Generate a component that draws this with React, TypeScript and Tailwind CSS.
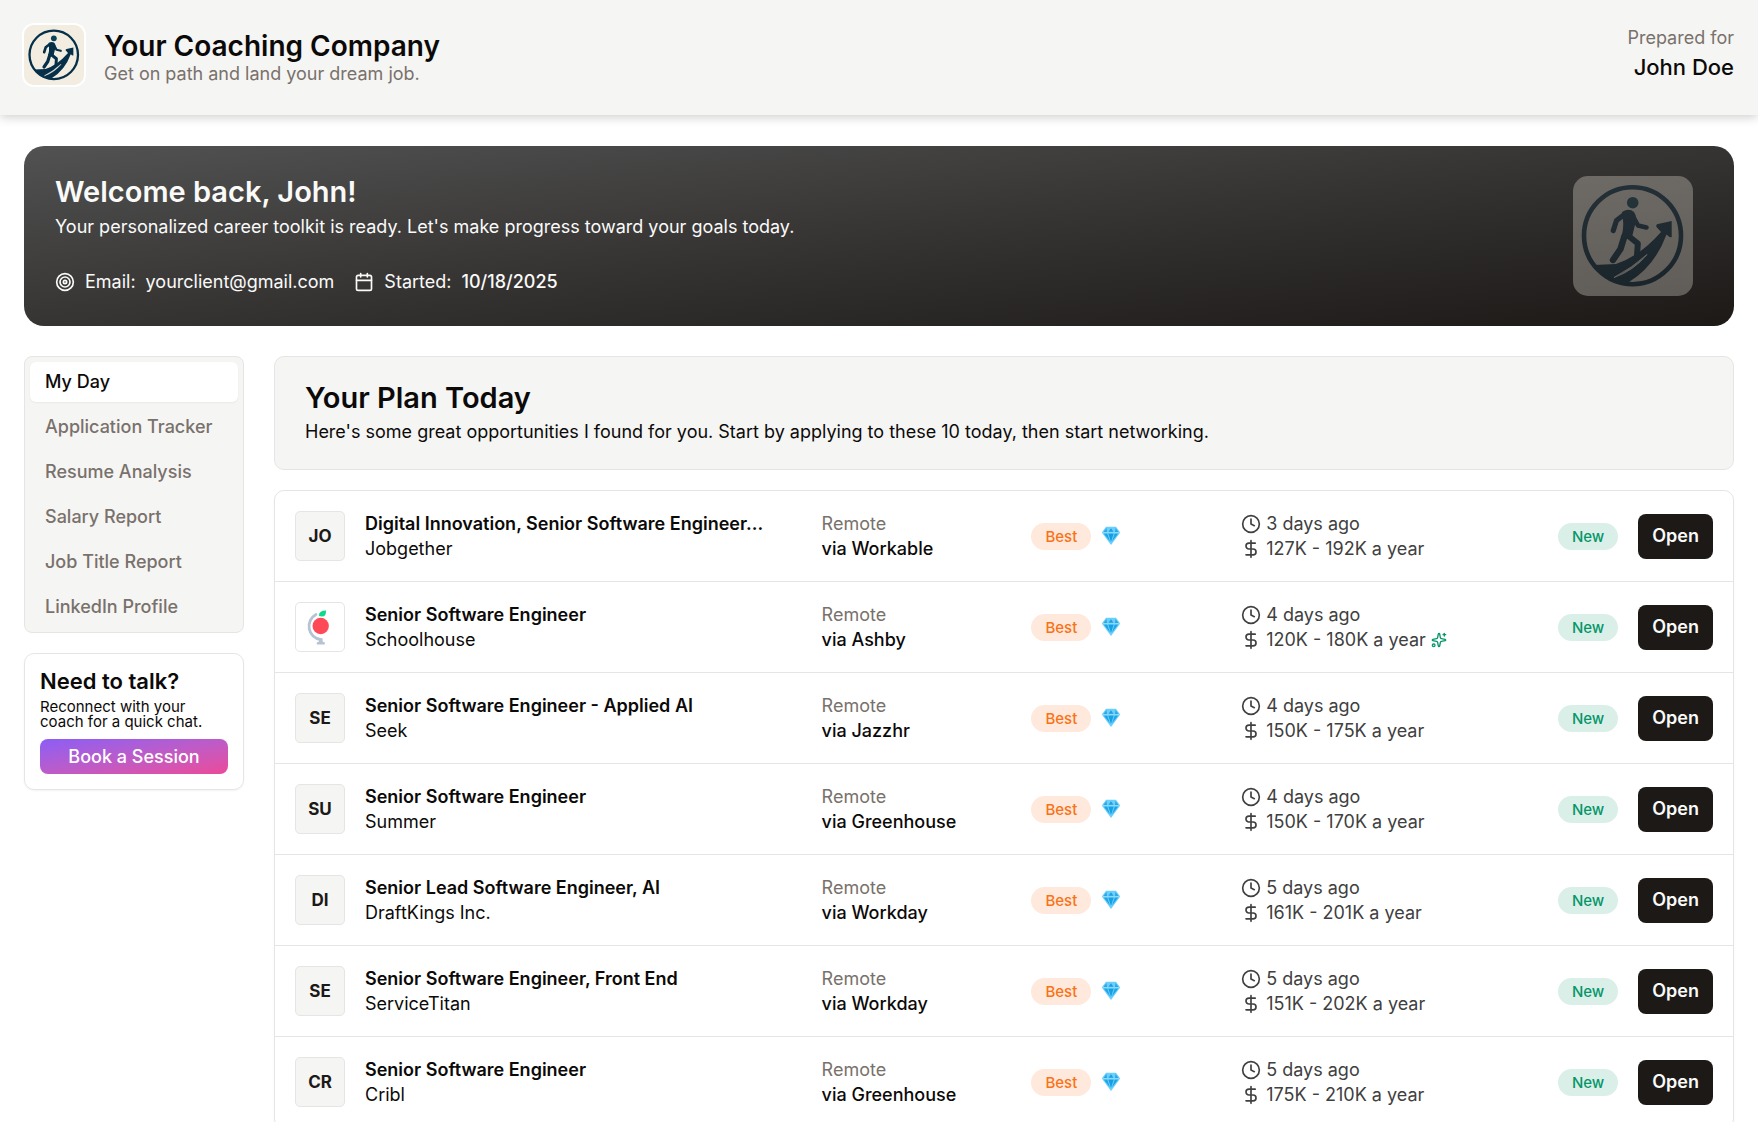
import React from 'react';
import { Calendar, Clock, DollarSign, Sparkles, Target } from 'lucide-react';
import clsx from 'clsx';

type Job = {
  initials: string;
  title: string;
  company: string;
  source: string;
  posted: string;
  salary: string;
  estimated?: boolean;
};

const tabs = [
  'My Day',
  'Application Tracker',
  'Resume Analysis',
  'Salary Report',
  'Job Title Report',
  'LinkedIn Profile',
];

const jobs: Job[] = [
  { initials: 'JO', title: 'Digital Innovation, Senior Software Engineer...', company: 'Jobgether', source: 'Workable', posted: '3 days ago', salary: '127K - 192K a year' },
  { initials: '', title: 'Senior Software Engineer', company: 'Schoolhouse', source: 'Ashby', posted: '4 days ago', salary: '120K - 180K a year', estimated: true },
  { initials: 'SE', title: 'Senior Software Engineer - Applied AI', company: 'Seek', source: 'Jazzhr', posted: '4 days ago', salary: '150K - 175K a year' },
  { initials: 'SU', title: 'Senior Software Engineer', company: 'Summer', source: 'Greenhouse', posted: '4 days ago', salary: '150K - 170K a year' },
  { initials: 'DI', title: 'Senior Lead Software Engineer, AI', company: 'DraftKings Inc.', source: 'Workday', posted: '5 days ago', salary: '161K - 201K a year' },
  { initials: 'SE', title: 'Senior Software Engineer, Front End', company: 'ServiceTitan', source: 'Workday', posted: '5 days ago', salary: '151K - 202K a year' },
  { initials: 'CR', title: 'Senior Software Engineer', company: 'Cribl', source: 'Greenhouse', posted: '5 days ago', salary: '175K - 210K a year' },
];

function CompanyLogo({ className }: { className?: string }) {
  return (
    <svg viewBox="0 0 120 120" className={className} aria-hidden="true">
      <rect width="120" height="120" fill="#f3ede1" />
      <circle cx="59.5" cy="59.7" r="48.5" fill="none" stroke="#06304a" strokeWidth="4.6" />
      <circle cx="59.7" cy="26.7" r="5.8" fill="#0b4257" />
      <g fill="none" stroke="#06304a" strokeLinecap="round" strokeLinejoin="round">
        <path d="M52 38 L43.5 44.5 L40.3 54.5" strokeWidth="5.2" />
        <path d="M61 42 L65 49.5 L73.5 51.5" strokeWidth="4.6" />
        <path d="M51.5 60 L47.5 73 L40 84" strokeWidth="6.4" />
        <path d="M55.5 60 L64.8 67.5 L64 80" strokeWidth="6" />
      </g>
      <path
        d="M49 36 Q56 31.5 61 36 Q64.5 41 62 49 L58.5 63 L48 62 Q51 52 50 44 Z"
        fill="#06304a"
      />
      <path
        d="M21 89 L43 88 Q67 80 88 56 L83.5 51 Q82.5 48.5 85 48 L98.7 45 L98.7 61 Q97 62 93.5 58.5 Q82 90 56 106 L58 109 A49 49 0 0 1 21 89 Z"
        fill="#06304a"
      />
      <path d="M41 101.5 Q59 92 74 78.5 Q61 94.5 41 101.5 Z" fill="#f3ede1" stroke="#f3ede1" />
    </svg>
  );
}

function SchoolhouseLogo() {
  return (
    <svg viewBox="0 0 48 48" className="size-full" aria-hidden="true">
      <path d="M20 11.5 A13 13.3 0 0 0 24.5 36.5" fill="none" stroke="#b6c3d3" strokeWidth="2.8" strokeLinecap="round" />
      <path d="M23 35.2 h3.6 v3.4 l2.2 1 v1.9 h-8 v-1.9 l2.200 -1 z" fill="#b6c3d3" />
      <circle cx="24.700" cy="23" r="8.2" fill="#fe4a56" />
      <path d="M23 13 Q22.5 7.5 30 7.5 Q30.5 13.5 26 13.5 Z" fill="#10d98c" />
    </svg>
  );
}

function Gem() {
  return (
    <svg viewBox="0 0 20 20" className="size-5" role="img" aria-label="gem">
      <path d="M5 .8 H15 L19.2 6.5 L10 19 L.8 6.5 Z" fill="#6ccffb" />
      <path d="M5.5 2 L2.5 6 H6 Z M14.5 2 L17.5 6 H14 Z" fill="#2aa7e4" />
      <path d="M7.5 5.8 L10 2.3 L12.5 5.8 Z" fill="#1d9fdf" />
      <path d="M2.8 7.4 H6.2 L9 15.5 Z M17.2 7.4 H13.8 L11 15.5 Z" fill="#1fa4e3" />
      <path d="M7.3 7.4 H12.7 L10 16 Z" fill="#15a0e6" />
      <path d="M1.5 6.7 H18.5" stroke="#9ae1ff" strokeWidth=".8" />
    </svg>
  );
}

function Header() {
  return (
    <header className="flex justify-between bg-stone-100 px-6 pt-[25px] pb-[29px] shadow-[0_2px_10px_rgba(0,0,0,0.2)]">
      <div className="flex items-start gap-5">
        <CompanyLogo className="size-[60px] rounded-[10px] ring-2 ring-white" />
        <div className="pt-[6px]">
          <h1 className="text-[28px] leading-[30px] font-semibold">Your Coaching Company</h1>
          <p className="text-lg leading-[25px] text-stone-500">Get on path and land your dream job.</p>
        </div>
      </div>
      <div className="text-right">
        <p className="text-lg leading-[25px] text-stone-500">Prepared for</p>
        <p className="text-[22px] leading-[35px] font-medium">John Doe</p>
      </div>
    </header>
  );
}

function Welcome() {
  return (
    <section className="flex justify-between rounded-[20px] bg-gradient-to-br from-[#525252] to-[#1c1917] py-[30px] pr-[41px] pl-[31px] text-stone-50">
      <div className="flex flex-col justify-between">
        <div>
          <h2 className="text-[29px] leading-8 font-semibold">Welcome back, John!</h2>
          <p className="mt-[5px] text-lg leading-7">
            Your personalized career toolkit is ready. Let's make progress toward your goals today.
          </p>
        </div>
        <div className="flex gap-5 text-lg leading-7">
          <div className="flex items-center gap-[10px]">
            <Target size={20} />
            <span>Email:</span>
            <span>yourclient@gmail.com</span>
          </div>
          <div className="flex items-center gap-[10px]">
            <Calendar size={20} />
            <span>Started:</span>
            <span className="font-medium">10/18/2025</span>
          </div>
        </div>
      </div>
      <CompanyLogo className="size-[120px] rounded-[15px] opacity-30" />
    </section>
  );
}

function Sidebar() {
  const [active, setActive] = React.useState('My Day');

  return (
    <aside className="flex w-[220px] shrink-0 flex-col gap-5">
      <nav className="flex flex-col gap-[5px] rounded-lg border border-stone-200 bg-stone-100 p-[5px]">
        {tabs.map((tab) => (
          <button
            key={tab}
            type="button"
            onClick={() => setActive(tab)}
            className={clsx(
              'h-10 rounded-md px-[15px] text-left text-lg font-medium whitespace-nowrap',
              active === tab ? 'bg-white text-stone-950 shadow-xs' : 'text-stone-500'
            )}
          >
            {tab}
          </button>
        ))}
      </nav>

      <section className="rounded-[10px] border border-stone-200 p-[15px] shadow-xs">
        <h3 className="text-[22px] leading-[25px] font-semibold">Need to talk?</h3>
        <p className="mt-[5px] text-[15px] leading-[15px]">Reconnect with your coach for a quick chat.</p>
        <button
          type="button"
          className="mt-[10px] h-[35px] w-full rounded-lg bg-gradient-to-br from-[#8b5cf6] to-[#ec4899] text-lg font-medium text-white"
        >
          Book a Session
        </button>
      </section>
    </aside>
  );
}

function JobRow({ job }: { job: Job }) {
  return (
    <li className="grid grid-cols-[50px_437fr_190fr_190fr_297fr_auto] items-center gap-5 border-b border-stone-200 p-5 text-lg leading-[25px]">
      <div
        className={clsx(
          'flex size-[50px] items-center justify-center rounded-[5px] border border-stone-200 text-[17px] font-bold text-stone-900',
          job.initials ? 'bg-stone-100' : 'bg-white'
        )}
      >
        {job.initials || <SchoolhouseLogo />}
      </div>
      <div className="min-w-0">
        <h4 className="truncate font-semibold">{job.title}</h4>
        <p className="truncate">{job.company}</p>
      </div>
      <div>
        <p className="text-stone-500">Remote</p>
        <p className="font-medium whitespace-nowrap">via {job.source}</p>
      </div>
      <div className="flex items-center gap-[10px]">
        <span className="rounded-full bg-[#fee9dc] px-[14px] py-[3px] text-[15px] leading-[21px] font-medium text-[#f97316]">
          Best
        </span>
        <Gem />
      </div>
      <div className="text-neutral-700">
        <p className="flex items-center gap-[5px]">
          <Clock size={20} />
          {job.posted}
        </p>
        <p className="flex items-center gap-[5px] whitespace-nowrap">
          <DollarSign size={20} />
          {job.salary}
          {job.estimated && <Sparkles size={16} className="text-[#059669]" />}
        </p>
      </div>
      <div className="flex items-center gap-5">
        <span className="rounded-full bg-[#daefe8] px-[14px] py-[3px] text-[15px] leading-[21px] font-medium text-[#059669]">
          New
        </span>
        <button type="button" className="h-[45px] rounded-lg bg-stone-900 px-[14px] text-lg font-semibold text-stone-50">
          Open
        </button>
      </div>
    </li>
  );
}

export default function App() {
  return (
    <div className="flex h-screen flex-col overflow-hidden bg-white font-['Inter',sans-serif] text-stone-950">
      <Header />
      <div className="px-6 pt-[31px]">
        <Welcome />
        <div className="mt-[30px] flex items-start gap-[30px]">
          <Sidebar />
          <main className="min-w-0 flex-1">
            <section className="rounded-[10px] border border-stone-200 bg-stone-100 px-[30px] py-[25px]">
              <h2 className="text-[29px] leading-8 font-semibold">Your Plan Today</h2>
              <p className="mt-[5px] text-lg leading-[25px]">
                Here's some great opportunities I found for you. Start by applying to these 10 today, then start networking.
              </p>
            </section>
            <ul className="mt-5 rounded-[10px] border border-stone-200 shadow-xs">
              {jobs.map((job, i) => (
                <JobRow key={i} job={job} />
              ))}
            </ul>
          </main>
        </div>
      </div>
    </div>
  );
}
